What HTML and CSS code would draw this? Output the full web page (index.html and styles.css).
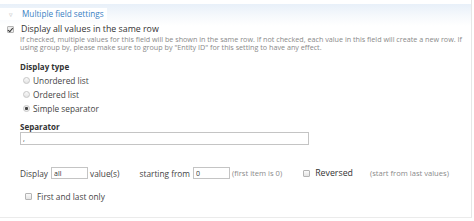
FILE: index.html
```html
<!doctype html>
<html lang="en">
<head>
  <meta charset="utf-8">
  <title>Multiple field settings</title>
  <link rel="stylesheet" href="styles.css">
</head>
<body>
  <div class="group">
    <div class="group-head">
      <span class="group-title"><span class="toggle">&#9663;</span>Multiple field settings</span>
    </div>

    <div class="check-row">
      <input type="checkbox" class="cb" id="sameRow" checked>
      <label for="sameRow" class="check-label">Display all values in the same row</label>
    </div>
    <div class="desc">If checked, multiple values for this field will be shown in the same row. If not checked, each value in this field will create a new row. If using group by, please make sure to group by "Entity ID" for this setting to have any effect.</div>

    <div class="sub">
      <div class="field-title">Display type</div>
      <div class="radios">
        <label class="radio-row"><input type="radio" class="rb" name="type"> Unordered list</label>
        <label class="radio-row"><input type="radio" class="rb" name="type"> Ordered list</label>
        <label class="radio-row"><input type="radio" class="rb" name="type" checked> Simple separator</label>
      </div>

      <div class="field-title sep-title">Separator</div>
      <input class="text wide" type="text" value=",">

      <div class="inline-row">
        <span>Display</span>
        <input class="text small" type="text" value="all">
        <span class="after">value(s)</span>
        <span>starting from</span>
        <input class="text small" type="text" value="0">
        <span class="hint">(first item is 0)</span>
        <input type="checkbox" class="cb rev-cb">
        <span class="rev">Reversed</span>
        <span class="hint hint-rev">(start from last values)</span>
      </div>

      <label class="first-last"><input type="checkbox" class="cb"> First and last only</label>
    </div>
  </div>
</body>
</html>
```

FILE: styles.css
```css
/* ===== Page ===== */
*{ box-sizing:border-box }
body{ margin:0; background:#fff; font-family:"Open Sans","DejaVu Sans",sans-serif; color:#333; }

/* ===== Group box ===== */
.group{
  width:472px; height:218px;
  padding:0 0 0 7px;
  border-right:1px solid #e6e6e6; border-bottom:1px solid #ebebeb;
  background:linear-gradient(#fff 0, #fff 4px, #e8f0f9 4px, #f6f9fc 16px, #fff 26px);
}
.group-head{ height:12px; margin-left:-7px; }
.group-title{
  display:inline-block; height:12px; white-space:nowrap;
  padding:0 3px 0 9px; background:#fff;
  font-size:8.2px; color:#3b82c4; line-height:12px;
}
.toggle{ display:inline-block; width:13px; color:#bbb; font-size:7px; }

.check-row{ display:flex; align-items:center; gap:7px; margin-top:12px; height:10px; }
.check-label{ font-size:8.8px; color:#333; }

.desc{ margin:1px 0 0 13px; font-size:7.2px; line-height:8px; color:#8a8a8a; width:452px; }

.sub{ padding-left:13px; }
.field-title{ font-size:8px; font-weight:700; color:#333; margin-top:11px; height:10px; line-height:10px; }
.radios{ display:flex; flex-direction:column; margin:1px 0 0 3px; }
.radio-row{ display:flex; align-items:center; gap:3px; height:14px; font-size:8.3px; color:#444; }

.sep-title{ margin-top:7px; }

/* ===== Inputs ===== */
.cb, .rb{ appearance:none; margin:0; flex:none; width:7px; height:7px; border:1px solid #b4b4b4; background:linear-gradient(#fafafa,#e4e4e4); }
.cb{ border-radius:1px; }
.cb:checked{ background:#ececec; position:relative; }
.cb:checked::after{ content:""; position:absolute; left:1px; top:0; width:2px; height:3.5px; border:solid #333; border-width:0 1.3px 1.3px 0; transform:rotate(40deg); }
.rb{ border-radius:50%; border-color:#c6c6c6; }
.rb:checked{ background:radial-gradient(circle, #444 0, #444 1.3px, #eee 1.8px); }

.text{ height:13px; border:1px solid #c4c4c4; font:7px "Open Sans",sans-serif; color:#333; padding:0 2px; outline:none; }
.wide{ width:289px; display:block; }
.small{ width:37px; height:12px; }

.inline-row{ display:flex; align-items:center; margin-top:22px; height:12px; font-size:8.3px; color:#444; }
.inline-row .text{ margin:0 2px 0 3px; }
.after{ margin-right:20px; }
.hint{ font-size:7.6px; color:#8a8a8a; }
.rev-cb{ margin-left:21px; }
.rev{ margin-left:5px; font-size:8.8px; color:#333; }
.hint-rev{ margin-left:17px; }

.first-last{ display:flex; align-items:center; gap:5px; height:10px; margin:12px 0 0 5px; font-size:8.3px; color:#444; }
```
